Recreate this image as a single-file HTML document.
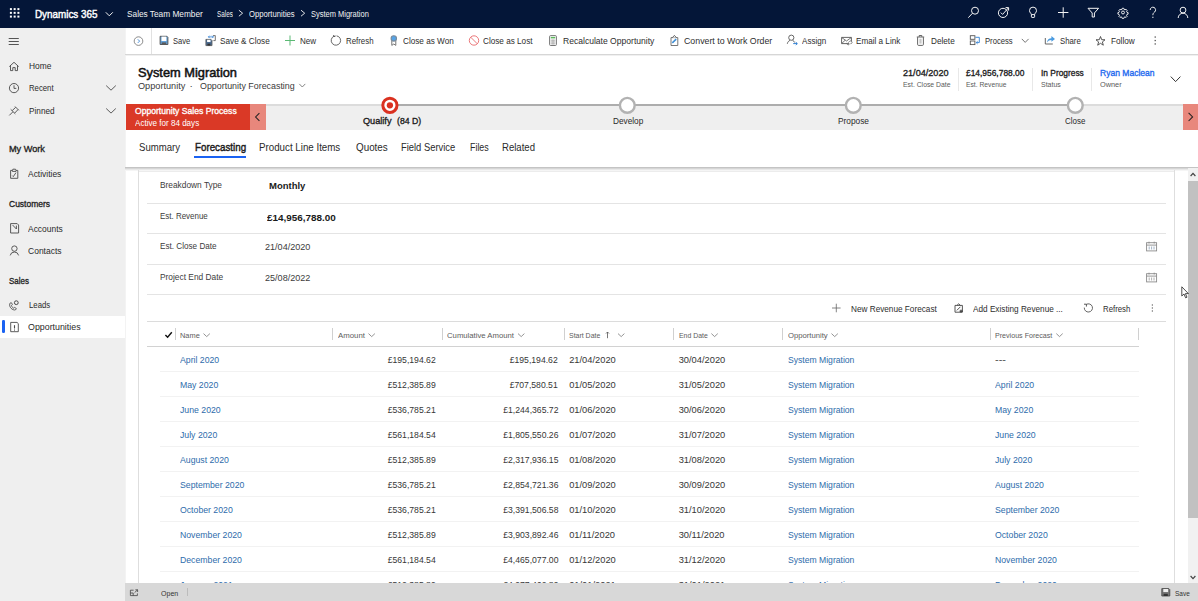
<!DOCTYPE html>
<html>
<head>
<meta charset="utf-8">
<style>
*{box-sizing:border-box;margin:0;padding:0}
html,body{width:1198px;height:601px;overflow:hidden;background:#fff;font-family:"Liberation Sans",sans-serif;color:#333}
.t{position:absolute;white-space:nowrap;display:block;line-height:20px}
.b{position:absolute}
svg{position:absolute;overflow:visible}
</style>
</head>
<body>
<!-- backgrounds -->
<div class="b" style="left:0;top:0;width:1198px;height:28px;background:#041638"></div>
<div class="b" style="left:0;top:28px;width:125px;height:573px;background:#efefef"></div>
<div class="b" style="left:125px;top:28px;width:1px;height:573px;background:#f3f3f3"></div>
<div class="b" style="left:0;top:316px;width:124.5px;height:21.5px;background:#fff"></div>
<div class="b" style="left:2.4px;top:320.2px;width:2.8px;height:12.8px;background:#1a62f2;border-radius:1.2px"></div>
<!-- command bar -->
<div class="b" style="left:125px;top:54px;width:1073px;height:1px;background:#d6d6d6"></div>
<div class="b" style="left:125px;top:55px;width:1073px;height:1px;background:#f0f0f0"></div>
<div class="b" style="left:151px;top:28px;width:1px;height:26px;background:#e1e1e1"></div>
<!-- header separators -->
<div class="b" style="left:958px;top:67.5px;width:1px;height:23px;background:#e8e8e8"></div>
<div class="b" style="left:1032px;top:67.5px;width:1px;height:23px;background:#e8e8e8"></div>
<div class="b" style="left:1091px;top:67.5px;width:1px;height:23px;background:#e8e8e8"></div>
<!-- BPF -->
<div class="b" style="left:126px;top:104px;width:1072px;height:26px;background:#efefef"></div>
<div class="b" style="left:266px;top:104px;width:917px;height:2px;background:#dcdcdc"></div>
<div class="b" style="left:390px;top:104px;width:685px;height:2px;background:#adadad"></div>
<div class="b" style="left:126px;top:104px;width:124px;height:26px;background:#da3926"></div>
<div class="b" style="left:250px;top:104px;width:16px;height:26px;background:#e8877c"></div>
<div class="b" style="left:1183px;top:104px;width:15px;height:26px;background:#e8877c"></div>
<svg style="left:126px;top:90px" width="1072" height="30" viewBox="126 90 1072 30">
<circle cx="389.9" cy="105.3" r="7.1" fill="#fff" stroke="#da3120" stroke-width="3"/><circle cx="389.9" cy="105.3" r="3.15" fill="#da3120"/>
<circle cx="627.3" cy="105.3" r="7.4" fill="#fff" stroke="#b2b2b2" stroke-width="2.4"/>
<circle cx="853.3" cy="105.3" r="7.4" fill="#fff" stroke="#b2b2b2" stroke-width="2.4"/>
<circle cx="1075.3" cy="105.3" r="7.4" fill="#fff" stroke="#b2b2b2" stroke-width="2.4"/>
</svg>
<svg style="left:254px;top:112px" width="7" height="10" viewBox="0 0 7 10"><path d="M5.4 1.2 L1.6 5 L5.4 8.8" fill="none" stroke="#222" stroke-width="1.05"/></svg>
<svg style="left:1187px;top:112px" width="7" height="10" viewBox="0 0 7 10"><path d="M1.6 0.8 L5.6 4.9 L1.6 9" fill="none" stroke="#222" stroke-width="1.05"/></svg>
<!-- tabs -->
<div class="b" style="left:194.2px;top:155.8px;width:52px;height:2px;background:#1a62f2"></div>
<div class="b" style="left:125px;top:167px;width:1073px;height:1px;background:#c4c4c4"></div>
<div class="b" style="left:125px;top:168px;width:1073px;height:1px;background:#d6d6d6"></div>
<div class="b" style="left:125px;top:169px;width:1073px;height:1px;background:#e8e8e8"></div>
<div class="b" style="left:125px;top:170px;width:1073px;height:1px;background:#f5f5f5"></div>
<div class="b" style="left:138px;top:170.5px;width:1037px;height:1px;background:#ececec"></div>
<!-- card -->
<div class="b" style="left:138px;top:170px;width:1px;height:413px;background:#dedede"></div>
<div class="b" style="left:1174px;top:170px;width:1px;height:413px;background:#dedede"></div>
<div class="b" style="left:147px;top:203px;width:1019px;height:1px;background:#e4e4e4"></div>
<div class="b" style="left:147px;top:233px;width:1019px;height:1px;background:#e4e4e4"></div>
<div class="b" style="left:147px;top:264px;width:1019px;height:1px;background:#e4e4e4"></div>
<div class="b" style="left:147px;top:294px;width:1019px;height:1px;background:#e4e4e4"></div>
<div class="b" style="left:147px;top:321px;width:1019px;height:1px;background:#dcdcdc"></div>
<div class="b" style="left:147px;top:346px;width:992px;height:1px;background:#d2d2d2"></div>
<div class="b" style="left:175px;top:328.4px;width:1px;height:12px;background:#d0d0d0"></div>
<div class="b" style="left:332px;top:328.4px;width:1px;height:12px;background:#d0d0d0"></div>
<div class="b" style="left:442px;top:328.4px;width:1px;height:12px;background:#d0d0d0"></div>
<div class="b" style="left:564px;top:328.4px;width:1px;height:12px;background:#d0d0d0"></div>
<div class="b" style="left:673px;top:328.4px;width:1px;height:12px;background:#d0d0d0"></div>
<div class="b" style="left:782px;top:328.4px;width:1px;height:12px;background:#d0d0d0"></div>
<div class="b" style="left:990px;top:328.4px;width:1px;height:12px;background:#d0d0d0"></div>
<div class="b" style="left:1138px;top:328.4px;width:1px;height:12px;background:#d0d0d0"></div>
<div class="b" style="left:160px;top:370.7px;width:979px;height:1.5px;background:#f2f2f2"></div>
<div class="b" style="left:160px;top:395.7px;width:979px;height:1.5px;background:#f2f2f2"></div>
<div class="b" style="left:160px;top:420.7px;width:979px;height:1.5px;background:#f2f2f2"></div>
<div class="b" style="left:160px;top:445.7px;width:979px;height:1.5px;background:#f2f2f2"></div>
<div class="b" style="left:160px;top:470.7px;width:979px;height:1.5px;background:#f2f2f2"></div>
<div class="b" style="left:160px;top:495.7px;width:979px;height:1.5px;background:#f2f2f2"></div>
<div class="b" style="left:160px;top:520.7px;width:979px;height:1.5px;background:#f2f2f2"></div>
<div class="b" style="left:160px;top:545.7px;width:979px;height:1.5px;background:#f2f2f2"></div>
<div class="b" style="left:160px;top:570.7px;width:979px;height:1.5px;background:#f2f2f2"></div>
<div class="b" style="left:160px;top:595.7px;width:979px;height:1.5px;background:#f2f2f2"></div>
<!-- scrollbar -->
<div class="b" style="left:1188px;top:168px;width:10px;height:415px;background:#f1f1f1"></div>
<div class="b" style="left:1188px;top:181px;width:10px;height:336.5px;background:#c1c1c1"></div>
<svg style="left:1190px;top:172px" width="6" height="5" viewBox="0 0 6 5"><path d="M0.6 4 L3 1.4 L5.4 4" fill="none" stroke="#444" stroke-width="1.2"/></svg>
<svg style="left:1190px;top:575px" width="6" height="5" viewBox="0 0 6 5"><path d="M0.6 1 L3 3.6 L5.4 1" fill="none" stroke="#444" stroke-width="1.2"/></svg>
<!-- ===== top bar icons ===== -->
<svg style="left:0;top:0" width="1198" height="28" viewBox="0 0 1198 28">
<g fill="#fff">
<rect x="9.9" y="8.1" width="2" height="2"/><rect x="13.65" y="8.1" width="2" height="2"/><rect x="17.4" y="8.1" width="2" height="2"/>
<rect x="9.9" y="11.85" width="2" height="2"/><rect x="13.65" y="11.85" width="2" height="2"/><rect x="17.4" y="11.85" width="2" height="2"/>
<rect x="9.9" y="15.6" width="2" height="2"/><rect x="13.65" y="15.6" width="2" height="2"/><rect x="17.4" y="15.6" width="2" height="2"/>
</g>
<g fill="none" stroke="#f4f4f4" stroke-width="1" stroke-linecap="butt">
<path d="M105.8 12.3 L109.3 15.8 L112.8 12.3"/>
<path d="M238.9 10.2 L242.6 13.2 L238.9 16.2" stroke-width="0.9"/>
<path d="M301 10.2 L304.7 13.2 L301 16.2" stroke-width="0.9"/>
<!-- search -->
<circle cx="975" cy="10.7" r="3.5"/><path d="M972.4 13.3 L968.3 17.7"/>
<!-- target/goal -->
<circle cx="1003" cy="12.9" r="4.6"/><path d="M1000.8 12.6 L1002.6 14.4 L1008.3 8.0 M1005.6 7.6 L1008.6 7.6 L1008.6 10.6"/>
<!-- bulb -->
<path d="M1031.4 14.6 C1031.4 13.4 1029.5 12.7 1029.5 10.6 A3.5 3.5 0 0 1 1036.5 10.6 C1036.5 12.7 1034.6 13.4 1034.6 14.6 Z M1031.4 14.6 V16.8 Q1031.4 17.4 1032 17.4 H1034 Q1034.6 17.4 1034.6 16.8 V14.6"/>
<!-- plus -->
<path d="M1058 12.5 H1068.4 M1063.2 7.3 V17.7"/>
<!-- filter -->
<path d="M1088 8.3 H1098.6 L1094.4 13 V17 H1092.2 V13 Z"/>
<!-- gear -->
<g transform="translate(1123 12.5) scale(0.86) translate(-1123 -12.5)"><circle cx="1123" cy="12.5" r="1.7" stroke-width="1.1"/>
<path d="M1122.1 7.6 h1.8 l0.3 1.3 l1.2 0.5 l1.1 -0.7 l1.3 1.3 l-0.7 1.1 l0.5 1.2 l1.3 0.3 v1.8 l-1.3 0.3 l-0.5 1.2 l0.7 1.1 l-1.3 1.3 l-1.1 -0.7 l-1.2 0.5 l-0.3 1.3 h-1.8 l-0.3 -1.3 l-1.2 -0.5 l-1.1 0.7 l-1.3 -1.3 l0.7 -1.1 l-0.5 -1.2 l-1.3 -0.3 v-1.8 l1.3 -0.3 l0.5 -1.2 l-0.7 -1.1 l1.3 -1.3 l1.1 0.7 l1.2 -0.5 z" stroke-width="1.1"/></g>
<!-- help -->
<path d="M1150.2 10 A2.7 2.7 0 1 1 1154.6 12 C1153.4 13 1152.9 13.5 1152.9 15.2 M1152.9 16.7 V18"/>
<!-- person -->
<circle cx="1183" cy="10.1" r="2.9"/><path d="M1178.2 18 A4.8 4.8 0 0 1 1187.8 18"/>
</g>
</svg>
<!-- ===== sidebar icons ===== -->
<svg style="left:0;top:28px" width="125" height="320" viewBox="0 28 125 320">
<g fill="none" stroke="#4a4a4a" stroke-width="0.9">
<path d="M8.7 38.5 H18.8 M8.7 41.5 H18.8 M8.7 44.5 H18.8" stroke="#555" stroke-width="1.1"/>
<!-- home -->
<path d="M9.3 66.6 L14 62.3 L18.7 66.6 M10.5 65.6 V70.6 H12.8 V67.6 H15.2 V70.6 H17.5 V65.6"/>
<!-- recent -->
<circle cx="14" cy="88.1" r="4.6"/><path d="M14 85.3 V88.4 H16.3"/>
<path d="M106.2 85.6 L111 90.2 L115.8 85.6"/>
<!-- pin -->
<path d="M9.3 115.4 L12.9 111.8 M10.7 109.3 L15.3 113.9 M15 106.5 L18.8 110.3 M15.7 107.3 L12.2 110.6 M18 109.6 L14.7 113.1"/>
<path d="M106.2 108.5 L111 113.1 L115.8 108.5"/>
<!-- activities -->
<path d="M10.6 170.4 H12.4 L12.9 169.2 H15.5 L16 170.4 H17.8 V178.3 H10.6 Z M12.3 175.6 L13.3 176.6 L16 172.6 M12.4 170.4 V171.4 H16 V170.4"/>
<!-- accounts -->
<path d="M10.6 223.6 H17.2 L18.6 225 V233 H10.6 Z M12.6 225 L16.4 229 V225.6"/>
<!-- contacts -->
<circle cx="14.4" cy="248.6" r="2.7"/><path d="M10.2 255.4 A4.3 4.3 0 0 1 18.6 255.4"/>
<!-- leads -->
<circle cx="16.3" cy="302.7" r="1.9" stroke-width="1"/>
<path d="M10.2 303 C8.6 305.4 10.6 309.6 14.6 310 C15.6 310 16.2 309.4 16.4 308.6 L14.6 307.4 L13.6 308.2 C12.4 307.6 11.7 306.6 11.5 305.4 L12.4 304.6 L11.5 302.8 C11 302.6 10.5 302.7 10.2 303 Z" stroke-width="0.85"/>
<!-- opportunities -->
<path d="M10.7 322.4 H17 L18.3 323.6 V331.7 H10.7 Z" stroke-width="0.9"/>
<path d="M14.5 325.2 V328.5" stroke-width="1.1"/><path d="M14.5 329.5 V330.6" stroke-width="1.1"/>
</g>
</svg>
<!-- ===== command bar icons ===== -->
<svg style="left:126px;top:28px" width="1072" height="26" viewBox="126 28 1072 26">
<!-- expand chevron circle -->
<circle cx="138.5" cy="41.1" r="4.3" fill="none" stroke="#777" stroke-width="0.85"/>
<path d="M137.8 39.3 L139.6 41.1 L137.8 42.9" fill="none" stroke="#4a90d9" stroke-width="1"/>
<!-- save -->
<path d="M160.1 36.3 H167 L167.9 37.2 V44.5 H160.1 Z" fill="#62a0d8" stroke="#4d4d4d" stroke-width="0.9"/>
<rect x="161.5" y="36.6" width="4.9" height="4.4" fill="#fff"/>
<rect x="161.7" y="42.4" width="4.5" height="2.1" fill="#5a5a5a"/>
<!-- save & close -->
<path d="M205.9 39.4 H211 L212 40.4 V45.6 H205.9 Z" fill="#4d6f96" stroke="#555" stroke-width="0.8"/>
<rect x="207.1" y="39.8" width="3.4" height="2.2" fill="#fff"/>
<rect x="207.4" y="43.6" width="3" height="2" fill="#333"/>
<path d="M213 35.6 H215.3 V40.6 H213.4" fill="none" stroke="#666" stroke-width="0.9"/>
<path d="M208.4 36.9 H213.4 M209.6 35.7 L208.4 36.9 L209.6 38.1 M212.2 35.7 L213.4 36.9 L212.2 38.1" fill="none" stroke="#2f7fd3" stroke-width="0.8"/>
<!-- new -->
<path d="M285 40.5 H295 M290 35.5 V45.5" fill="none" stroke="#5bb974" stroke-width="1"/>
<!-- refresh -->
<path d="M334 36.2 A4.7 4.7 0 1 0 336.6 35.85" fill="none" stroke="#555" stroke-width="0.9"/>
<path d="M333.6 35 L334.2 36.6 L335.6 36" fill="none" stroke="#333" stroke-width="0.9"/>
<!-- close as won (ribbon) -->
<path d="M391.8 40.8 V45.4 L393.8 44 L395.8 45.4 V40.8" fill="none" stroke="#666" stroke-width="0.9"/>
<circle cx="393.8" cy="38.4" r="2.7" fill="#56a3e6" stroke="#7a8a9a" stroke-width="1.1"/>
<!-- close as lost -->
<circle cx="474" cy="40.5" r="4.7" fill="none" stroke="#e8696b" stroke-width="0.9"/>
<path d="M470.7 37.2 L477.3 43.8" fill="none" stroke="#e8696b" stroke-width="0.9"/>
<!-- calculator -->
<rect x="549.6" y="35.6" width="6.8" height="9.9" rx="1" fill="#fff" stroke="#666" stroke-width="0.9"/>
<rect x="550.8" y="36.9" width="4.4" height="1.5" fill="#5cb85c"/>
<path d="M550.6 40.2 H555.4 M550.6 42 H555.4 M550.6 43.8 H555.4 M552.2 39.4 V44.6 M553.8 39.4 V44.6" stroke="#999" stroke-width="0.6" fill="none"/>
<!-- convert to work order -->
<path d="M671 37.6 H677.8 V45.5 H671 Z" fill="#fff" stroke="#666" stroke-width="0.9"/>
<path d="M672.4 37.6 L674.4 35.4 L676.4 37.6" fill="#fff" stroke="#555" stroke-width="0.9"/>
<path d="M672.3 42.8 L676.2 39.2" stroke="#3f8fd6" stroke-width="1.6" fill="none"/>
<!-- assign -->
<circle cx="791.3" cy="37.7" r="2.6" fill="none" stroke="#555" stroke-width="0.9"/>
<path d="M787.3 43.8 C787.6 42 788.8 40.8 790 40.4 M792.6 40.4 C793.6 40.8 794.4 41.6 794.8 42.6" fill="none" stroke="#555" stroke-width="0.9"/>
<path d="M793.2 43.6 H797.2 M795.8 42.2 L797.3 43.6 L795.8 45" fill="none" stroke="#2f7fd3" stroke-width="1"/>
<!-- email a link -->
<path d="M849 43.6 H841.6 V37.4 H851.4 V41.4" fill="none" stroke="#555" stroke-width="0.9"/>
<path d="M841.8 37.6 L846.5 41 L851.2 37.6 M841.8 43.4 L845.2 40.2" fill="none" stroke="#555" stroke-width="0.8"/>
<path d="M848.2 42.6 L849.6 41.4 A1.4 1.4 0 0 1 851.6 43.4 L850.9 44 M850.4 43.2 L849 44.6 A1.4 1.4 0 0 1 847 42.8" fill="none" stroke="#666" stroke-width="0.8"/>
<!-- delete -->
<path d="M916.8 37 H924.2 M919.2 36.8 V35.5 H921.8 V36.8" fill="none" stroke="#555" stroke-width="0.9"/>
<path d="M917.6 37.2 V44.4 Q917.6 45.4 918.6 45.4 H922.4 Q923.4 45.4 923.4 44.4 V37.2" fill="none" stroke="#555" stroke-width="0.9"/>
<rect x="919.4" y="38.8" width="2.2" height="4.8" fill="#c8c8c8"/>
<!-- process -->
<rect x="970.3" y="35.7" width="4.6" height="3.6" fill="#fff" stroke="#555" stroke-width="0.9"/>
<rect x="970.3" y="41" width="4.6" height="3.6" fill="#fff" stroke="#555" stroke-width="0.9"/>
<path d="M975.4 37.3 H979.3 V42.6 H976.4 M977.6 41.3 L976.2 42.6 L977.6 43.9" fill="none" stroke="#2f7fd3" stroke-width="0.9"/>
<path d="M1021.8 38.9 L1025.2 42.4 L1028.6 38.9" fill="none" stroke="#666" stroke-width="0.9"/>
<!-- share -->
<path d="M1045.3 38 V44 H1052.8" fill="none" stroke="#666" stroke-width="1"/>
<path d="M1047 42.6 C1047.2 39.6 1049 38.2 1051.4 38.2 V35.9 L1055 38.9 L1051.4 41.8 V39.9 C1049.6 39.9 1048.2 40.6 1047 42.6 Z" fill="#4a9be0"/>
<!-- follow star -->
<path d="M1100.5 36.5 L1101.7 39.7 L1105 39.8 L1102.4 41.9 L1103.3 45.2 L1100.5 43.3 L1097.7 45.2 L1098.6 41.9 L1096 39.8 L1099.3 39.7 Z" fill="none" stroke="#444" stroke-width="0.9"/>
<!-- overflow -->
<g fill="#444"><rect x="1154.6" y="36.4" width="1.2" height="1.3"/><rect x="1154.6" y="39.9" width="1.2" height="1.3"/><rect x="1154.6" y="43.3" width="1.2" height="1.3"/></g>
</svg>
<!-- ===== header chevrons ===== -->
<svg style="left:126px;top:55px" width="1072" height="48" viewBox="126 55 1072 48">
<path d="M299.3 83.9 L302.3 87 L305.3 83.9" fill="none" stroke="#777" stroke-width="0.9"/>
<path d="M1170.8 76.6 L1175.6 81.6 L1180.4 76.6" fill="none" stroke="#333" stroke-width="1"/>
</svg>
<!-- ===== form / subgrid icons ===== -->
<svg style="left:126px;top:170px" width="1072" height="180" viewBox="126 170 1072 180">
<!-- calendar icons -->
<g fill="none" stroke="#8a8a8a" stroke-width="0.9" transform="translate(0,-0.5)">
<rect x="1146.6" y="243.2" width="10" height="8.2"/><path d="M1146.6 245.6 H1156.6 M1149 242.2 V244 M1154.2 242.2 V244"/>
<path d="M1149.2 247 V250 M1151.6 247 V250 M1154 247 V250" stroke="#8aa0b8" stroke-width="0.8"/>
<rect x="1146.6" y="274.2" width="10" height="8.2"/><path d="M1146.6 276.6 H1156.6 M1149 273.2 V275 M1154.2 273.2 V275"/>
<path d="M1149.2 278 V281 M1151.6 278 V281 M1154 278 V281" stroke="#999" stroke-width="0.8"/>
</g>
<!-- toolbar: + -->
<path d="M832 308 H840.6 M836.3 303.7 V312.3" fill="none" stroke="#666" stroke-width="0.8"/>
<!-- add existing (clipboard) -->
<path d="M955 305.4 H962.4 V312.2 H955 Z M957 305.4 L958.7 303.8 L960.4 305.4 M956.8 310.4 L960.4 306.8" fill="none" stroke="#444" stroke-width="0.9"/>
<path d="M961 309.6 V312.6 M959.5 311.1 H962.5" fill="none" stroke="#222" stroke-width="0.9"/>
<!-- refresh -->
<path d="M1086.3 304.4 A4.1 4.1 0 1 1 1084.3 307.6" fill="none" stroke="#555" stroke-width="0.9"/>
<path d="M1084 304.2 H1086.4 V306.6" fill="none" stroke="#444" stroke-width="0.9"/>
<g fill="#555"><rect x="1151.8" y="304.4" width="1.1" height="1.2"/><rect x="1151.8" y="307.4" width="1.1" height="1.2"/><rect x="1151.8" y="310.4" width="1.1" height="1.2"/></g>
<!-- grid header -->
<path d="M165.4 335 L167.6 337.3 L171.8 332.2" fill="none" stroke="#111" stroke-width="1.4"/>
<g fill="none" stroke="#777" stroke-width="0.8">
<path d="M203.5 333.6 L206.7 336.6 L209.9 333.6"/>
<path d="M368.5 333.6 L371.7 336.6 L374.9 333.6"/>
<path d="M518 333.6 L521.2 336.6 L524.4 333.6"/>
<path d="M618 333.6 L621.2 336.6 L624.4 333.6"/>
<path d="M711.4 333.6 L714.6 336.6 L717.8 333.6"/>
<path d="M831.5 333.6 L834.7 336.6 L837.9 333.6"/>
<path d="M1056.3 333.6 L1059.5 336.6 L1062.7 333.6"/>
<path d="M607.5 338.2 V332 M606 333.5 L607.5 332 L609 333.5" stroke="#555"/>
</g>
</svg>
<!-- mouse cursor -->
<svg style="left:1181px;top:286px" width="9" height="13" viewBox="0 0 9 13"><path d="M0.8 0.8 V10 L3 8 L4.6 11.8 L6 11.2 L4.4 7.6 H7.4 Z" fill="#fff" stroke="#222" stroke-width="0.8"/></svg>

<span class="t" id="t0" style="left:35.00px;top:5px;transform-origin:0 50%;font-size:10.4px;color:#fff;-webkit-text-stroke:0.42px #fff;transform:scaleX(0.9492);">Dynamics 365</span>
<span class="t" id="t1" style="left:126.70px;top:4px;transform-origin:0 50%;font-size:9.6px;color:#f2f2f2;transform:scaleX(0.8632);">Sales Team Member</span>
<span class="t" id="t2" style="left:216.70px;top:4px;transform-origin:0 50%;font-size:8.4px;color:#f2f2f2;transform:scaleX(0.7541);">Sales</span>
<span class="t" id="t3" style="left:248.80px;top:4px;transform-origin:0 50%;font-size:8.4px;color:#f2f2f2;transform:scaleX(0.9174);">Opportunities</span>
<span class="t" id="t4" style="left:310.50px;top:4px;transform-origin:0 50%;font-size:8.4px;color:#f2f2f2;transform:scaleX(0.8933);">System Migration</span>
<span class="t" id="t5" style="left:173.30px;top:31px;transform-origin:0 50%;font-size:9.4px;color:#2e2e2e;transform:scaleX(0.8047);">Save</span>
<span class="t" id="t6" style="left:220.30px;top:31px;transform-origin:0 50%;font-size:9.4px;color:#2e2e2e;transform:scaleX(0.8748);">Save &amp; Close</span>
<span class="t" id="t7" style="left:299.70px;top:31px;transform-origin:0 50%;font-size:9.4px;color:#2e2e2e;transform:scaleX(0.8580);">New</span>
<span class="t" id="t8" style="left:345.50px;top:31px;transform-origin:0 50%;font-size:9.4px;color:#2e2e2e;transform:scaleX(0.8377);">Refresh</span>
<span class="t" id="t9" style="left:403.00px;top:31px;transform-origin:0 50%;font-size:9.4px;color:#2e2e2e;transform:scaleX(0.8730);">Close as Won</span>
<span class="t" id="t10" style="left:483.30px;top:31px;transform-origin:0 50%;font-size:9.4px;color:#2e2e2e;transform:scaleX(0.8713);">Close as Lost</span>
<span class="t" id="t11" style="left:562.80px;top:31px;transform-origin:0 50%;font-size:9.4px;color:#2e2e2e;transform:scaleX(0.9134);">Recalculate Opportunity</span>
<span class="t" id="t12" style="left:683.70px;top:31px;transform-origin:0 50%;font-size:9.4px;color:#2e2e2e;transform:scaleX(0.9380);">Convert to Work Order</span>
<span class="t" id="t13" style="left:802.00px;top:31px;transform-origin:0 50%;font-size:9.4px;color:#2e2e2e;transform:scaleX(0.8600);">Assign</span>
<span class="t" id="t14" style="left:856.20px;top:31px;transform-origin:0 50%;font-size:9.4px;color:#2e2e2e;transform:scaleX(0.8673);">Email a Link</span>
<span class="t" id="t15" style="left:930.80px;top:31px;transform-origin:0 50%;font-size:9.4px;color:#2e2e2e;transform:scaleX(0.8742);">Delete</span>
<span class="t" id="t16" style="left:984.50px;top:31px;transform-origin:0 50%;font-size:9.4px;color:#2e2e2e;transform:scaleX(0.8177);">Process</span>
<span class="t" id="t17" style="left:1059.50px;top:31px;transform-origin:0 50%;font-size:9.4px;color:#2e2e2e;transform:scaleX(0.8310);">Share</span>
<span class="t" id="t18" style="left:1110.50px;top:31px;transform-origin:0 50%;font-size:9.4px;color:#2e2e2e;transform:scaleX(0.8784);">Follow</span>
<span class="t" id="t19" style="left:28.60px;top:56px;transform-origin:0 50%;font-size:9.3px;color:#2a2a2a;transform:scaleX(0.9028);">Home</span>
<span class="t" id="t20" style="left:28.60px;top:78px;transform-origin:0 50%;font-size:9.3px;color:#2a2a2a;transform:scaleX(0.8348);">Recent</span>
<span class="t" id="t21" style="left:28.60px;top:101px;transform-origin:0 50%;font-size:9.3px;color:#2a2a2a;transform:scaleX(0.8842);">Pinned</span>
<span class="t" id="t22" style="left:28.30px;top:164px;transform-origin:0 50%;font-size:9.3px;color:#2a2a2a;transform:scaleX(0.9077);">Activities</span>
<span class="t" id="t23" style="left:28.10px;top:219px;transform-origin:0 50%;font-size:9.3px;color:#2a2a2a;transform:scaleX(0.9072);">Accounts</span>
<span class="t" id="t24" style="left:28.10px;top:241px;transform-origin:0 50%;font-size:9.3px;color:#2a2a2a;transform:scaleX(0.9155);">Contacts</span>
<span class="t" id="t25" style="left:28.60px;top:295px;transform-origin:0 50%;font-size:9.3px;color:#2a2a2a;transform:scaleX(0.8365);">Leads</span>
<span class="t" id="t26" style="left:28.10px;top:317px;transform-origin:0 50%;font-size:9.3px;color:#2a2a2a;transform:scaleX(0.9512);">Opportunities</span>
<span class="t" id="t27" style="left:8.90px;top:139px;transform-origin:0 50%;font-size:9.2px;color:#1f1f1f;-webkit-text-stroke:0.33px #1f1f1f;">My Work</span>
<span class="t" id="t28" style="left:8.90px;top:194px;transform-origin:0 50%;font-size:9.2px;color:#1f1f1f;-webkit-text-stroke:0.33px #1f1f1f;transform:scaleX(0.9252);">Customers</span>
<span class="t" id="t29" style="left:8.70px;top:271px;transform-origin:0 50%;font-size:9.2px;color:#1f1f1f;-webkit-text-stroke:0.33px #1f1f1f;transform:scaleX(0.8658);">Sales</span>
<span class="t" id="t30" style="left:138.00px;top:63px;transform-origin:0 50%;font-size:12.4px;color:#111;-webkit-text-stroke:0.5px #111;transform:scaleX(1.0343);">System Migration</span>
<span class="t" id="t31" style="left:138.00px;top:76px;transform-origin:0 50%;font-size:9.9px;color:#3a3a3a;transform:scaleX(0.9263);">Opportunity</span>
<span class="t" id="t32" style="left:189.50px;top:76px;transform-origin:0 50%;font-size:9.9px;color:#3a3a3a;">·</span>
<span class="t" id="t33" style="left:200.30px;top:76px;transform-origin:0 50%;font-size:9.9px;color:#3a3a3a;transform:scaleX(0.8986);">Opportunity Forecasting</span>
<span class="t" id="t34" style="left:902.50px;top:63px;transform-origin:0 50%;font-size:9.0px;color:#1c1c1c;-webkit-text-stroke:0.33px #1c1c1c;transform:scaleX(1.0101);">21/04/2020</span>
<span class="t" id="t35" style="left:902.50px;top:75px;transform-origin:0 50%;font-size:7.7px;color:#5a5a5a;transform:scaleX(0.8891);">Est. Close Date</span>
<span class="t" id="t36" style="left:966.30px;top:63px;transform-origin:0 50%;font-size:9.0px;color:#1c1c1c;-webkit-text-stroke:0.33px #1c1c1c;transform:scaleX(0.9335);">£14,956,788.00</span>
<span class="t" id="t37" style="left:966.30px;top:75px;transform-origin:0 50%;font-size:7.7px;color:#5a5a5a;transform:scaleX(0.8753);">Est. Revenue</span>
<span class="t" id="t38" style="left:1040.50px;top:63px;transform-origin:0 50%;font-size:9.0px;color:#1c1c1c;-webkit-text-stroke:0.33px #1c1c1c;transform:scaleX(0.9298);">In Progress</span>
<span class="t" id="t39" style="left:1040.50px;top:75px;transform-origin:0 50%;font-size:7.7px;color:#5a5a5a;transform:scaleX(0.9084);">Status</span>
<span class="t" id="t40" style="left:1099.60px;top:63px;transform-origin:0 50%;font-size:9.0px;color:#1d69ef;-webkit-text-stroke:0.33px #1d69ef;transform:scaleX(0.9490);">Ryan Maclean</span>
<span class="t" id="t41" style="left:1099.60px;top:75px;transform-origin:0 50%;font-size:7.7px;color:#5a5a5a;transform:scaleX(0.9534);">Owner</span>
<span class="t" id="t42" style="left:135.00px;top:101px;transform-origin:0 50%;font-size:9.0px;color:#fff;-webkit-text-stroke:0.33px #fff;transform:scaleX(0.9544);">Opportunity Sales Process</span>
<span class="t" id="t43" style="left:135.00px;top:113px;transform-origin:0 50%;font-size:9.0px;color:#fff;transform:scaleX(0.8973);">Active for 84 days</span>
<span class="t" id="t44" style="left:363.10px;top:111px;transform-origin:0 50%;font-size:9.0px;color:#1a1a1a;-webkit-text-stroke:0.33px #1a1a1a;transform:scaleX(1.0173);">Qualify</span>
<span class="t" id="t45" style="left:396.50px;top:111px;transform-origin:0 50%;font-size:9.0px;color:#1a1a1a;-webkit-text-stroke:0.33px #1a1a1a;transform:scaleX(0.9634);">(84 D)</span>
<span class="t" id="t46" style="left:613.00px;top:111px;transform-origin:0 50%;font-size:9.0px;color:#2a2a2a;transform:scaleX(0.9173);">Develop</span>
<span class="t" id="t47" style="left:838.30px;top:111px;transform-origin:0 50%;font-size:9.0px;color:#2a2a2a;transform:scaleX(0.9245);">Propose</span>
<span class="t" id="t48" style="left:1064.60px;top:111px;transform-origin:0 50%;font-size:9.0px;color:#2a2a2a;transform:scaleX(0.8864);">Close</span>
<span class="t" id="t49" style="left:138.70px;top:137px;transform-origin:0 50%;font-size:11.0px;color:#2a2a2a;transform:scaleX(0.8712);">Summary</span>
<span class="t" id="t50" style="left:194.70px;top:137px;transform-origin:0 50%;font-size:11.0px;color:#1a1a1a;-webkit-text-stroke:0.42px #1a1a1a;transform:scaleX(0.8889);">Forecasting</span>
<span class="t" id="t51" style="left:259.25px;top:137px;transform-origin:0 50%;font-size:11.0px;color:#2a2a2a;transform:scaleX(0.8859);">Product Line Items</span>
<span class="t" id="t52" style="left:355.75px;top:137px;transform-origin:0 50%;font-size:11.0px;color:#2a2a2a;transform:scaleX(0.8952);">Quotes</span>
<span class="t" id="t53" style="left:400.75px;top:137px;transform-origin:0 50%;font-size:11.0px;color:#2a2a2a;transform:scaleX(0.8533);">Field Service</span>
<span class="t" id="t54" style="left:470.00px;top:137px;transform-origin:0 50%;font-size:11.0px;color:#2a2a2a;transform:scaleX(0.8070);">Files</span>
<span class="t" id="t55" style="left:502.00px;top:137px;transform-origin:0 50%;font-size:11.0px;color:#2a2a2a;transform:scaleX(0.8702);">Related</span>
<span class="t" id="t56" style="left:160.40px;top:175px;transform-origin:0 50%;font-size:9.3px;color:#3c3c3c;transform:scaleX(0.8973);">Breakdown Type</span>
<span class="t" id="t57" style="left:268.80px;top:176px;transform-origin:0 50%;font-size:9.3px;color:#1a1a1a;font-weight:bold;transform:scaleX(1.0213);">Monthly</span>
<span class="t" id="t58" style="left:160.40px;top:206px;transform-origin:0 50%;font-size:9.3px;color:#3c3c3c;transform:scaleX(0.8562);">Est. Revenue</span>
<span class="t" id="t59" style="left:266.50px;top:208px;transform-origin:0 50%;font-size:9.3px;color:#1a1a1a;font-weight:bold;transform:scaleX(1.0646);">£14,956,788.00</span>
<span class="t" id="t60" style="left:160.40px;top:236px;transform-origin:0 50%;font-size:9.3px;color:#3c3c3c;transform:scaleX(0.8762);">Est. Close Date</span>
<span class="t" id="t61" style="left:264.90px;top:237px;transform-origin:0 50%;font-size:9.3px;color:#3c3c3c;transform:scaleX(0.9757);">21/04/2020</span>
<span class="t" id="t62" style="left:160.40px;top:267px;transform-origin:0 50%;font-size:9.3px;color:#3c3c3c;transform:scaleX(0.8992);">Project End Date</span>
<span class="t" id="t63" style="left:264.90px;top:268px;transform-origin:0 50%;font-size:9.3px;color:#3c3c3c;transform:scaleX(0.9757);">25/08/2022</span>
<span class="t" id="t64" style="left:850.60px;top:299px;transform-origin:0 50%;font-size:9.3px;color:#2e2e2e;transform:scaleX(0.8831);">New Revenue Forecast</span>
<span class="t" id="t65" style="left:973.40px;top:299px;transform-origin:0 50%;font-size:9.3px;color:#2e2e2e;transform:scaleX(0.8830);">Add Existing Revenue ...</span>
<span class="t" id="t66" style="left:1103.00px;top:299px;transform-origin:0 50%;font-size:9.3px;color:#2e2e2e;transform:scaleX(0.8384);">Refresh</span>
<span class="t" id="t67" style="left:179.70px;top:326px;transform-origin:0 50%;font-size:7.9px;color:#5c5c5c;transform:scaleX(0.9401);">Name</span>
<span class="t" id="t68" style="left:337.80px;top:326px;transform-origin:0 50%;font-size:7.9px;color:#5c5c5c;transform:scaleX(0.9889);">Amount</span>
<span class="t" id="t69" style="left:446.70px;top:326px;transform-origin:0 50%;font-size:7.9px;color:#5c5c5c;transform:scaleX(0.9792);">Cumulative Amount</span>
<span class="t" id="t70" style="left:569.20px;top:326px;transform-origin:0 50%;font-size:7.9px;color:#5c5c5c;transform:scaleX(0.8809);">Start Date</span>
<span class="t" id="t71" style="left:678.70px;top:326px;transform-origin:0 50%;font-size:7.9px;color:#5c5c5c;transform:scaleX(0.8752);">End Date</span>
<span class="t" id="t72" style="left:787.80px;top:326px;transform-origin:0 50%;font-size:7.9px;color:#5c5c5c;transform:scaleX(0.9731);">Opportunity</span>
<span class="t" id="t73" style="left:995.00px;top:326px;transform-origin:0 50%;font-size:7.9px;color:#5c5c5c;transform:scaleX(0.9010);">Previous Forecast</span>
<span class="t" id="t74" style="left:160.80px;top:584px;transform-origin:0 50%;font-size:8.0px;color:#333;z-index:7;transform:scaleX(0.8785);">Open</span>
<span class="t" id="t75" style="left:1174.50px;top:584px;transform-origin:0 50%;font-size:8.0px;color:#333;z-index:7;transform:scaleX(0.8117);">Save</span>
<span class="t" id="t1000" style="left:180.00px;top:350px;transform-origin:0 50%;font-size:9.3px;color:#2e6cab;transform:scaleX(0.9361);">April 2020</span>
<span class="t" id="t1001" style="right:762.40px;top:350px;transform-origin:100% 50%;font-size:9.3px;color:#363636;transform:scaleX(0.9284);">£195,194.62</span>
<span class="t" id="t1002" style="right:640.00px;top:350px;transform-origin:100% 50%;font-size:9.3px;color:#363636;transform:scaleX(0.9284);">£195,194.62</span>
<span class="t" id="t1003" style="left:569.20px;top:350px;transform-origin:0 50%;font-size:9.3px;color:#363636;">21/04/2020</span>
<span class="t" id="t1004" style="left:678.70px;top:350px;transform-origin:0 50%;font-size:9.3px;color:#363636;">30/04/2020</span>
<span class="t" id="t1005" style="left:787.80px;top:350px;transform-origin:0 50%;font-size:9.3px;color:#2e6cab;transform:scaleX(0.9244);">System Migration</span>
<span class="t" id="t1006" style="left:995.00px;top:350px;transform-origin:0 50%;font-size:9.3px;color:#363636;transform:scaleX(1.1832);">---</span>
<span class="t" id="t1007" style="left:180.00px;top:375px;transform-origin:0 50%;font-size:9.3px;color:#2e6cab;transform:scaleX(0.9361);">May 2020</span>
<span class="t" id="t1008" style="right:762.40px;top:375px;transform-origin:100% 50%;font-size:9.3px;color:#363636;transform:scaleX(0.9284);">£512,385.89</span>
<span class="t" id="t1009" style="right:640.00px;top:375px;transform-origin:100% 50%;font-size:9.3px;color:#363636;transform:scaleX(0.9284);">£707,580.51</span>
<span class="t" id="t1010" style="left:569.20px;top:375px;transform-origin:0 50%;font-size:9.3px;color:#363636;">01/05/2020</span>
<span class="t" id="t1011" style="left:678.70px;top:375px;transform-origin:0 50%;font-size:9.3px;color:#363636;">31/05/2020</span>
<span class="t" id="t1012" style="left:787.80px;top:375px;transform-origin:0 50%;font-size:9.3px;color:#2e6cab;transform:scaleX(0.9244);">System Migration</span>
<span class="t" id="t1013" style="left:995.00px;top:375px;transform-origin:0 50%;font-size:9.3px;color:#2e6cab;transform:scaleX(0.9361);">April 2020</span>
<span class="t" id="t1014" style="left:180.00px;top:400px;transform-origin:0 50%;font-size:9.3px;color:#2e6cab;transform:scaleX(0.9361);">June 2020</span>
<span class="t" id="t1015" style="right:762.40px;top:400px;transform-origin:100% 50%;font-size:9.3px;color:#363636;transform:scaleX(0.9284);">£536,785.21</span>
<span class="t" id="t1016" style="right:640.00px;top:400px;transform-origin:100% 50%;font-size:9.3px;color:#363636;transform:scaleX(0.9284);">£1,244,365.72</span>
<span class="t" id="t1017" style="left:569.20px;top:400px;transform-origin:0 50%;font-size:9.3px;color:#363636;">01/06/2020</span>
<span class="t" id="t1018" style="left:678.70px;top:400px;transform-origin:0 50%;font-size:9.3px;color:#363636;">30/06/2020</span>
<span class="t" id="t1019" style="left:787.80px;top:400px;transform-origin:0 50%;font-size:9.3px;color:#2e6cab;transform:scaleX(0.9244);">System Migration</span>
<span class="t" id="t1020" style="left:995.00px;top:400px;transform-origin:0 50%;font-size:9.3px;color:#2e6cab;transform:scaleX(0.9361);">May 2020</span>
<span class="t" id="t1021" style="left:180.00px;top:425px;transform-origin:0 50%;font-size:9.3px;color:#2e6cab;transform:scaleX(0.9361);">July 2020</span>
<span class="t" id="t1022" style="right:762.40px;top:425px;transform-origin:100% 50%;font-size:9.3px;color:#363636;transform:scaleX(0.9284);">£561,184.54</span>
<span class="t" id="t1023" style="right:640.00px;top:425px;transform-origin:100% 50%;font-size:9.3px;color:#363636;transform:scaleX(0.9284);">£1,805,550.26</span>
<span class="t" id="t1024" style="left:569.20px;top:425px;transform-origin:0 50%;font-size:9.3px;color:#363636;">01/07/2020</span>
<span class="t" id="t1025" style="left:678.70px;top:425px;transform-origin:0 50%;font-size:9.3px;color:#363636;">31/07/2020</span>
<span class="t" id="t1026" style="left:787.80px;top:425px;transform-origin:0 50%;font-size:9.3px;color:#2e6cab;transform:scaleX(0.9244);">System Migration</span>
<span class="t" id="t1027" style="left:995.00px;top:425px;transform-origin:0 50%;font-size:9.3px;color:#2e6cab;transform:scaleX(0.9361);">June 2020</span>
<span class="t" id="t1028" style="left:180.00px;top:450px;transform-origin:0 50%;font-size:9.3px;color:#2e6cab;transform:scaleX(0.9361);">August 2020</span>
<span class="t" id="t1029" style="right:762.40px;top:450px;transform-origin:100% 50%;font-size:9.3px;color:#363636;transform:scaleX(0.9284);">£512,385.89</span>
<span class="t" id="t1030" style="right:640.00px;top:450px;transform-origin:100% 50%;font-size:9.3px;color:#363636;transform:scaleX(0.9284);">£2,317,936.15</span>
<span class="t" id="t1031" style="left:569.20px;top:450px;transform-origin:0 50%;font-size:9.3px;color:#363636;">01/08/2020</span>
<span class="t" id="t1032" style="left:678.70px;top:450px;transform-origin:0 50%;font-size:9.3px;color:#363636;">31/08/2020</span>
<span class="t" id="t1033" style="left:787.80px;top:450px;transform-origin:0 50%;font-size:9.3px;color:#2e6cab;transform:scaleX(0.9244);">System Migration</span>
<span class="t" id="t1034" style="left:995.00px;top:450px;transform-origin:0 50%;font-size:9.3px;color:#2e6cab;transform:scaleX(0.9361);">July 2020</span>
<span class="t" id="t1035" style="left:180.00px;top:475px;transform-origin:0 50%;font-size:9.3px;color:#2e6cab;transform:scaleX(0.9361);">September 2020</span>
<span class="t" id="t1036" style="right:762.40px;top:475px;transform-origin:100% 50%;font-size:9.3px;color:#363636;transform:scaleX(0.9284);">£536,785.21</span>
<span class="t" id="t1037" style="right:640.00px;top:475px;transform-origin:100% 50%;font-size:9.3px;color:#363636;transform:scaleX(0.9284);">£2,854,721.36</span>
<span class="t" id="t1038" style="left:569.20px;top:475px;transform-origin:0 50%;font-size:9.3px;color:#363636;">01/09/2020</span>
<span class="t" id="t1039" style="left:678.70px;top:475px;transform-origin:0 50%;font-size:9.3px;color:#363636;">30/09/2020</span>
<span class="t" id="t1040" style="left:787.80px;top:475px;transform-origin:0 50%;font-size:9.3px;color:#2e6cab;transform:scaleX(0.9244);">System Migration</span>
<span class="t" id="t1041" style="left:995.00px;top:475px;transform-origin:0 50%;font-size:9.3px;color:#2e6cab;transform:scaleX(0.9361);">August 2020</span>
<span class="t" id="t1042" style="left:180.00px;top:500px;transform-origin:0 50%;font-size:9.3px;color:#2e6cab;transform:scaleX(0.9361);">October 2020</span>
<span class="t" id="t1043" style="right:762.40px;top:500px;transform-origin:100% 50%;font-size:9.3px;color:#363636;transform:scaleX(0.9284);">£536,785.21</span>
<span class="t" id="t1044" style="right:640.00px;top:500px;transform-origin:100% 50%;font-size:9.3px;color:#363636;transform:scaleX(0.9284);">£3,391,506.58</span>
<span class="t" id="t1045" style="left:569.20px;top:500px;transform-origin:0 50%;font-size:9.3px;color:#363636;">01/10/2020</span>
<span class="t" id="t1046" style="left:678.70px;top:500px;transform-origin:0 50%;font-size:9.3px;color:#363636;">31/10/2020</span>
<span class="t" id="t1047" style="left:787.80px;top:500px;transform-origin:0 50%;font-size:9.3px;color:#2e6cab;transform:scaleX(0.9244);">System Migration</span>
<span class="t" id="t1048" style="left:995.00px;top:500px;transform-origin:0 50%;font-size:9.3px;color:#2e6cab;transform:scaleX(0.9361);">September 2020</span>
<span class="t" id="t1049" style="left:180.00px;top:525px;transform-origin:0 50%;font-size:9.3px;color:#2e6cab;transform:scaleX(0.9361);">November 2020</span>
<span class="t" id="t1050" style="right:762.40px;top:525px;transform-origin:100% 50%;font-size:9.3px;color:#363636;transform:scaleX(0.9284);">£512,385.89</span>
<span class="t" id="t1051" style="right:640.00px;top:525px;transform-origin:100% 50%;font-size:9.3px;color:#363636;transform:scaleX(0.9284);">£3,903,892.46</span>
<span class="t" id="t1052" style="left:569.20px;top:525px;transform-origin:0 50%;font-size:9.3px;color:#363636;">01/11/2020</span>
<span class="t" id="t1053" style="left:678.70px;top:525px;transform-origin:0 50%;font-size:9.3px;color:#363636;">30/11/2020</span>
<span class="t" id="t1054" style="left:787.80px;top:525px;transform-origin:0 50%;font-size:9.3px;color:#2e6cab;transform:scaleX(0.9244);">System Migration</span>
<span class="t" id="t1055" style="left:995.00px;top:525px;transform-origin:0 50%;font-size:9.3px;color:#2e6cab;transform:scaleX(0.9361);">October 2020</span>
<span class="t" id="t1056" style="left:180.00px;top:550px;transform-origin:0 50%;font-size:9.3px;color:#2e6cab;transform:scaleX(0.9361);">December 2020</span>
<span class="t" id="t1057" style="right:762.40px;top:550px;transform-origin:100% 50%;font-size:9.3px;color:#363636;transform:scaleX(0.9284);">£561,184.54</span>
<span class="t" id="t1058" style="right:640.00px;top:550px;transform-origin:100% 50%;font-size:9.3px;color:#363636;transform:scaleX(0.9284);">£4,465,077.00</span>
<span class="t" id="t1059" style="left:569.20px;top:550px;transform-origin:0 50%;font-size:9.3px;color:#363636;">01/12/2020</span>
<span class="t" id="t1060" style="left:678.70px;top:550px;transform-origin:0 50%;font-size:9.3px;color:#363636;">31/12/2020</span>
<span class="t" id="t1061" style="left:787.80px;top:550px;transform-origin:0 50%;font-size:9.3px;color:#2e6cab;transform:scaleX(0.9244);">System Migration</span>
<span class="t" id="t1062" style="left:995.00px;top:550px;transform-origin:0 50%;font-size:9.3px;color:#2e6cab;transform:scaleX(0.9361);">November 2020</span>
<span class="t" id="t1063" style="left:180.00px;top:575px;transform-origin:0 50%;font-size:9.3px;color:#2e6cab;transform:scaleX(0.9361);">January 2021</span>
<span class="t" id="t1064" style="right:762.40px;top:575px;transform-origin:100% 50%;font-size:9.3px;color:#363636;transform:scaleX(0.9284);">£512,385.89</span>
<span class="t" id="t1065" style="right:640.00px;top:575px;transform-origin:100% 50%;font-size:9.3px;color:#363636;transform:scaleX(0.9284);">£4,977,462.89</span>
<span class="t" id="t1066" style="left:569.20px;top:575px;transform-origin:0 50%;font-size:9.3px;color:#363636;">01/01/2021</span>
<span class="t" id="t1067" style="left:678.70px;top:575px;transform-origin:0 50%;font-size:9.3px;color:#363636;">31/01/2021</span>
<span class="t" id="t1068" style="left:787.80px;top:575px;transform-origin:0 50%;font-size:9.3px;color:#2e6cab;transform:scaleX(0.9244);">System Migration</span>
<span class="t" id="t1069" style="left:995.00px;top:575px;transform-origin:0 50%;font-size:9.3px;color:#2e6cab;transform:scaleX(0.9361);">December 2020</span>
<!-- footer (drawn last to clip grid) -->
<div class="b" style="left:125px;top:583px;width:1073px;height:18px;background:#d8d8d8;z-index:5"></div>
<div class="b" style="left:187px;top:588.3px;width:1px;height:8px;background:#bcbcbc;z-index:6"></div>
<svg style="left:126px;top:583px;z-index:7" width="1072" height="18" viewBox="126 583 1072 18">
<path d="M133.6 590.2 H130.4 V595.6 H137.4 V593.4 M130.4 593 H133.2 V595.6" fill="none" stroke="#444" stroke-width="0.8"/>
<path d="M134.6 592.6 L137.6 589.8 M135.4 589.8 H137.6 V592" fill="none" stroke="#444" stroke-width="0.8"/>
<path d="M1161.8 588.6 H1168.8 L1169.8 589.6 V596 H1161.8 Z" fill="#777" stroke="#444" stroke-width="0.8"/>
<rect x="1163.3" y="589" width="4.8" height="3" fill="#eee"/>
<rect x="1163.6" y="593.8" width="4.2" height="2.2" fill="#333"/>
</svg>

</body>
</html>
